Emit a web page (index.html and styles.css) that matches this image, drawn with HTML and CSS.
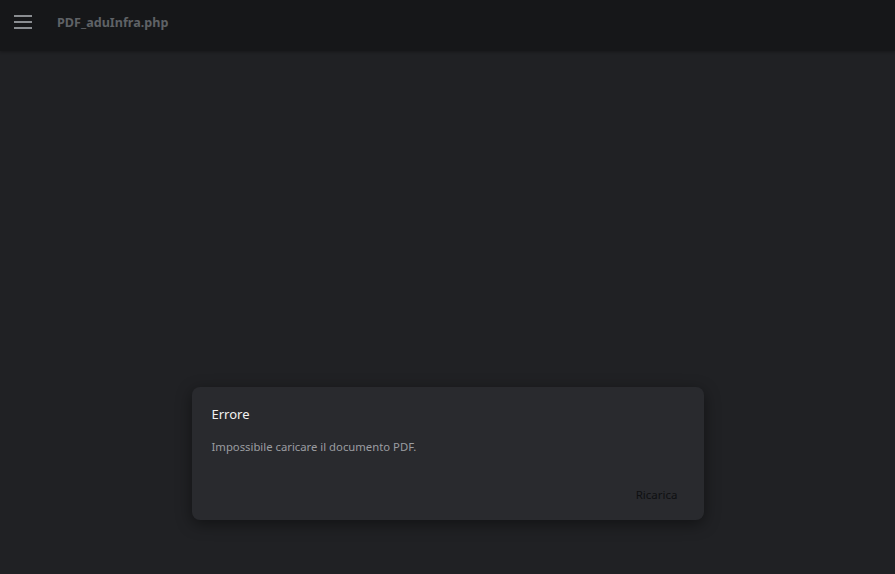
FILE: index.html
```html
<!DOCTYPE html>
<html lang="it">
<head>
<meta charset="utf-8">
<title>PDF_aduInfra.php</title>
<link rel="stylesheet" href="styles.css">
</head>
<body>
<div class="app">
  <header class="toolbar">
    <button class="menu-btn" aria-label="Menu">
      <svg width="18" height="14" viewBox="0 0 18 14"><rect x="0" y="0" width="18" height="2" fill="#8a8d91"/><rect x="0" y="6" width="18" height="2" fill="#8a8d91"/><rect x="0" y="12" width="18" height="2" fill="#8a8d91"/></svg>
    </button>
    <span class="doc-title">PDF_aduInfra.php</span>
  </header>
  <main class="content">
    <div class="dialog">
      <div class="dialog-title">Errore</div>
      <div class="dialog-body">Impossibile caricare il documento PDF.</div>
      <div class="dialog-actions"><button class="action">Ricarica</button></div>
    </div>
  </main>
</div>
</body>
</html>
```
FILE: styles.css
```css
html, body { margin: 0; padding: 0; height: 100%; }
body { background: #202124; font-family: "Noto Sans", "Open Sans", sans-serif; }
.app { display: flex; flex-direction: column; height: 100%; }
.toolbar {
  height: 51px; flex: none; background: #161719;
  display: flex; align-items: center;
  box-shadow: 0 1px 3px rgba(0,0,0,0.3);
}
.menu-btn {
  background: none; border: 0; padding: 0; margin: 0 0 0 14px;
  width: 18px; height: 14px; display: flex; cursor: pointer;
  position: relative; top: -4px;
}
.doc-title {
  margin-left: 25px; color: #5f6266; font-weight: 700; font-size: 12.6px;
  position: relative; top: -3px;
}
.content {
  flex: 1; display: flex; flex-direction: column; align-items: center;
  justify-content: flex-end; padding-bottom: 54px;
}
.dialog {
  width: 512px; height: 133px; box-sizing: border-box;
  background: #292a2e; border-radius: 8px;
  box-shadow: 0 4px 16px rgba(0,0,0,0.45);
  padding: 17px 20px 14px 20px;
  display: flex; flex-direction: column;
}
.dialog-title { color: #f1f1f1; font-size: 13px; line-height: 20px; }
.dialog-body { color: #9b9da1; font-size: 11.3px; line-height: 18px; margin-top: 14px; }
.dialog-actions { margin-top: auto; display: flex; justify-content: flex-end; }
.action {
  background: none; border: 0; font-family: inherit; font-size: 11.5px;
  color: #0f1012; padding: 4px 6px; margin-right: 0;
}
```
